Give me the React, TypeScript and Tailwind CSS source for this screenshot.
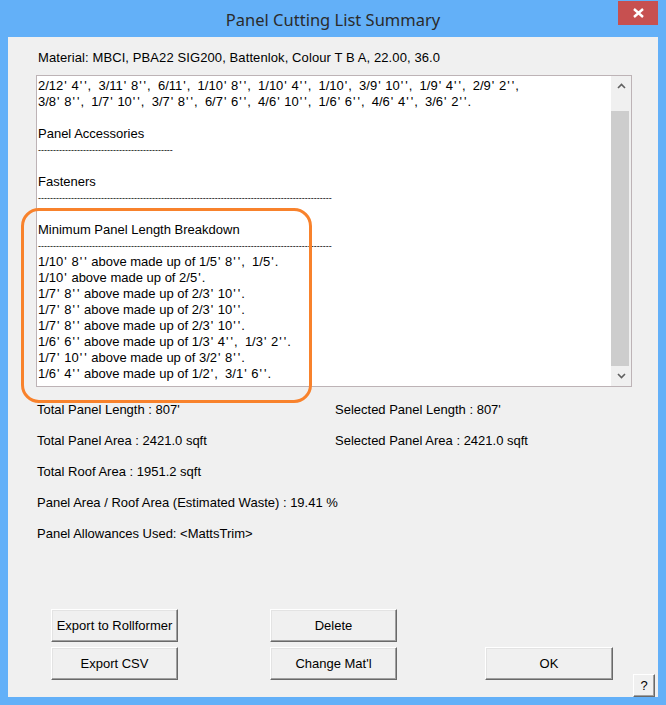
import React from "react";

const listLines: string[] = [
  "2/12' 4'',  3/11' 8'',  6/11',  1/10' 8'',  1/10' 4'',  1/10',  3/9' 10'',  1/9' 4'',  2/9' 2'',",
  "3/8' 8'',  1/7' 10'',  3/7' 8'',  6/7' 6'',  4/6' 10'',  1/6' 6'',  4/6' 4'',  3/6' 2''.",
  "",
  "Panel Accessories",
  "#dash:45",
  "",
  "Fasteners",
  "#dash:98",
  "",
  "Minimum Panel Length Breakdown",
  "#dash:98",
  "1/10' 8'' above made up of 1/5' 8'',  1/5'.",
  "1/10' above made up of 2/5'.",
  "1/7' 8'' above made up of 2/3' 10''.",
  "1/7' 8'' above made up of 2/3' 10''.",
  "1/7' 8'' above made up of 2/3' 10''.",
  "1/6' 6'' above made up of 1/3' 4'',  1/3' 2''.",
  "1/7' 10'' above made up of 3/2' 8''.",
  "1/6' 4'' above made up of 1/2',  3/1' 6''.",
];

// the old dialog font draws the foot/inch ticks wider than Arial does
function Ticks({ text }: { text: string }) {
  const parts = text.split("'");
  return (
    <>
      {parts.map((p, i) => (
        <React.Fragment key={i}>
          {p}
          {i < parts.length - 1 && <span className="px-[1px]">'</span>}
        </React.Fragment>
      ))}
    </>
  );
}

function Chevron({ up }: { up?: boolean }) {
  return (
    <svg width="9" height="6" viewBox="0 0 9 6">
      <path
        d={up ? "M1 5 L4.5 1.5 L8 5" : "M1 1 L4.5 4.5 L8 1"}
        fill="none"
        stroke="#606060"
        strokeWidth="1.6"
      />
    </svg>
  );
}

function WinButton({ label, className = "" }: { label: string; className?: string }) {
  return (
    <button
      className={
        "h-[33px] w-[127px] bg-[#f0f0f0] border border-t-white border-l-white border-r-[#696969] border-b-[#696969] shadow-[inset_-1px_-1px_0_#a0a0a0,inset_1px_1px_0_#e3e3e3] text-[13px] text-black " +
        className
      }
    >
      {label}
    </button>
  );
}

export default function App() {
  return (
    <div className="relative w-[666px] h-[705px] bg-[#63b0f8] flex flex-col font-['Liberation_Sans',Arial,sans-serif]">
      {/* title bar */}
      <div className="h-[37px] grid grid-cols-[1fr_auto_1fr]">
        <div />
        <div className="pt-[9px] text-[16.5px] leading-[22px] text-[#2b2b2b] font-['Noto_Sans',sans-serif]">
          Panel Cutting List Summary
        </div>
        <div className="flex justify-end pr-[8px] pt-[1px]">
          <div className="w-[40px] h-[24px] bg-[#c75050] flex items-center justify-center">
            <svg width="11" height="10" viewBox="0 0 11 10">
              <path d="M1 1 L10 9 M10 1 L1 9" stroke="#fff" strokeWidth="2.4" />
            </svg>
          </div>
        </div>
      </div>

      {/* client area */}
      <div className="mx-[8px] mb-[8px] flex-1 bg-[#f0f0f0] flex flex-col text-[13px] leading-[16px] text-black">
        <div className="pt-[13px] pl-[30px] tracking-[0.1px]">
          Material: MBCI, PBA22 SIG200, Battenlok, Colour T B A, 22.00, 36.0
        </div>

        <div className="ml-[28px] mt-[9px] w-[596px] h-[312px] bg-white border border-[#bdb3b6] flex">
          <div className="flex-1 pl-[1px] pt-[2px] overflow-hidden">
            {listLines.map((line, i) =>
              line.startsWith("#dash:") ? (
                <div key={i} className="h-[16px] whitespace-nowrap text-[9px] leading-[17px]">
                  {"-".repeat(Number(line.slice(6)))}
                </div>
              ) : (
                <div key={i} className="h-[16px] whitespace-pre">
                  <Ticks text={line} />
                </div>
              )
            )}
          </div>
          <div className="w-[20px] bg-[#f0f0f0] flex flex-col">
            <div className="h-[20px] flex items-center justify-center">
              <Chevron up />
            </div>
            <div className="h-[15px]" />
            <div className="flex-1 w-[18px] bg-[#cdcdcd]" />
            <div className="h-[20px] flex items-center justify-center">
              <Chevron />
            </div>
          </div>
        </div>

        {/* totals */}
        <div className="mt-[15px] pl-[29px] flex flex-col gap-[15px]">
          <div className="flex">
            <div className="w-[298px]">Total Panel Length : 807'</div>
            <div>Selected Panel Length : 807'</div>
          </div>
          <div className="flex">
            <div className="w-[298px]">Total Panel Area : 2421.0 sqft</div>
            <div>Selected Panel Area : 2421.0 sqft</div>
          </div>
          <div>Total Roof Area : 1951.2 sqft</div>
          <div>Panel Area / Roof Area (Estimated Waste) : 19.41 %</div>
          <div>Panel Allowances Used: &lt;MattsTrim&gt;</div>
        </div>

        <div className="flex-1" />

        {/* buttons */}
        <div className="flex items-end">
          <div className="ml-[43px] mb-[17px] flex flex-col gap-[5px]">
            <WinButton label="Export to Rollformer" />
            <WinButton label="Export CSV" />
          </div>
          <div className="ml-[92px] mb-[17px] flex flex-col gap-[5px]">
            <WinButton label="Delete" />
            <WinButton label="Change Mat'l" />
          </div>
          <div className="ml-[88px] mb-[17px]">
            <WinButton label="OK" className="w-[128px]" />
          </div>
          <div className="ml-[20px]">
            <button className="w-[22px] h-[23px] bg-[#f0f0f0] border border-t-white border-l-white border-r-[#696969] border-b-[#696969] shadow-[inset_-1px_-1px_0_#a0a0a0] text-[13px] leading-[16px]">
              ?
            </button>
          </div>
        </div>
      </div>

      {/* orange annotation */}
      <div className="absolute left-[21px] top-[208px] w-[291px] h-[195px] border-[3px] border-[#f8822c] rounded-[18px] pointer-events-none" />
    </div>
  );
}
